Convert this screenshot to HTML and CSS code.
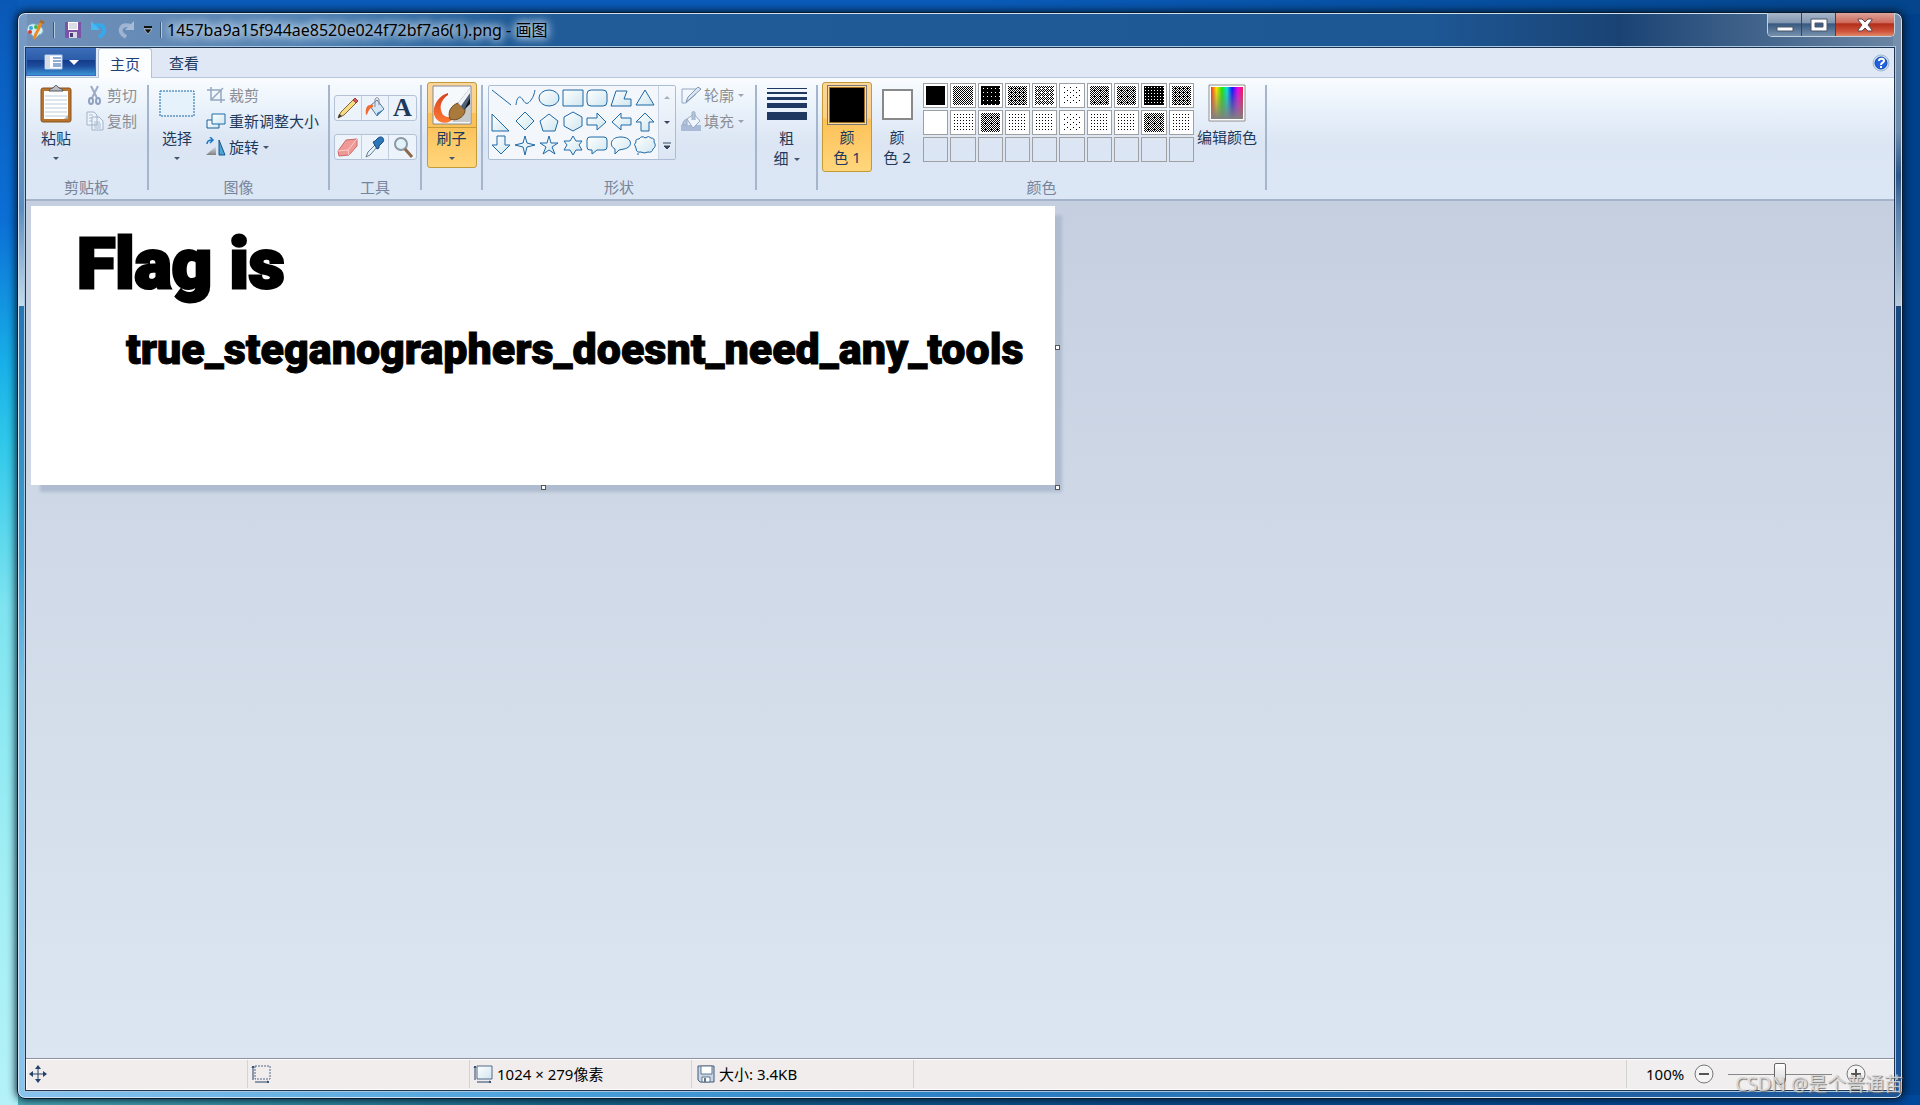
FILE: index.html
```html
<!DOCTYPE html>
<html lang="zh-CN">
<head>
<meta charset="utf-8">
<title>1457ba9a15f944ae8520e024f72bf7a6(1).png - 画图</title>
<link rel="stylesheet" href="styles.css">
</head>
<body>
<svg class="defs" aria-hidden="true">
  <defs>
    <linearGradient id="blueFill" x1="0" y1="0" x2="1" y2="1"><stop offset="0" stop-color="#fff"/><stop offset="1" stop-color="#cfe6ef"/></linearGradient>
    <linearGradient id="rainbow"><stop offset="0" stop-color="#ff2a1a"/><stop offset=".17" stop-color="#ffe600"/><stop offset=".34" stop-color="#20e800"/><stop offset=".5" stop-color="#00e5e5"/><stop offset=".66" stop-color="#1010ff"/><stop offset=".84" stop-color="#f000f0"/><stop offset="1" stop-color="#ff1040"/></linearGradient>
    <linearGradient id="greyFade" x1="0" y1="0" x2="0" y2="1"><stop offset="0" stop-color="#808080" stop-opacity="0"/><stop offset="1" stop-color="#808080"/></linearGradient>
    <linearGradient id="paintRed" x1="0" y1="0" x2="0" y2="1"><stop offset="0" stop-color="#d8401c"/><stop offset="1" stop-color="#ff7a35"/></linearGradient>
  </defs>
</svg>
<div class="window">
  <header class="titlebar">
    <svg class="app-icon" width="20" height="20" viewBox="0 0 20 20"><path d="M1 10C1 5 5 3 9 4c5 1 9 4 8 8-1 3-4 2-5 4-2 3-5 1-6-1-1-1-5-1-5-5z" fill="#d5edf8" stroke="#6da5c5"/><circle cx="5" cy="8" r="2" fill="#37a8d8"/><circle cx="10" cy="7" r="2" fill="#48b848"/><circle cx="4" cy="12" r="2" fill="#d93c2c"/><path d="M16 2c-3 2-2 5-4 8s-3 6-4 9" fill="none" stroke="#ed8a20" stroke-width="3"/><path d="M14 1l4 2" stroke="#a86c30" stroke-width="3"/></svg>
    <span class="bar"></span>
    <div class="quick">
      <button class="plain" aria-label="保存"><svg width="16" height="16" viewBox="0 0 16 16"><path d="M0 0h16v16H1L0 15z" fill="#7b54a8"/><path d="M3 0h10v8H3z" fill="#fff"/><path d="M4 2h8M4 4h8M4 6h8" stroke="#b8b8c8"/><path d="M4 10h8v6H4z" fill="#d8d8e4"/><path d="M5 11h3v4H5z" fill="#4c3c78"/></svg></button>
      <button class="plain" aria-label="撤消"><svg width="18" height="18" viewBox="0 0 18 18"><path d="M4 5c11-3 14 6 5 11" fill="none" stroke="#37a9ea" stroke-width="4"/><path d="M1 0v9h9z" fill="#48b8f4"/></svg></button>
      <button class="plain" aria-label="重做" disabled><svg width="18" height="18" viewBox="0 0 18 18"><path d="M14 5C3 2 0 11 9 16" fill="none" stroke="#9fb3d2" stroke-width="4"/><path d="M17 0v9H8z" fill="#a8bbd6"/></svg></button>
      <button class="plain" aria-label="自定义快速访问工具栏"><svg width="8" height="8" viewBox="0 0 8 8"><path d="M0 1h8" stroke="#111" stroke-width="2"/><path d="M0 3h8L4 8z" fill="#111" stroke="#fff" stroke-width=".5"/></svg></button>
    </div>
    <span class="bar"></span>
    <h1>1457ba9a15f944ae8520e024f72bf7a6(1).png - 画图</h1>
    <div class="caption-buttons">
      <button aria-label="最小化"><svg width="18" height="14" viewBox="0 0 18 14"><path d="M1 9h16v4H1z" fill="#fff" stroke="#4a5568"/></svg></button>
      <button aria-label="最大化"><svg width="18" height="14" viewBox="0 0 18 14"><path d="M1 1h16v12H1zM5 5v4h8V5z" fill="#fff" stroke="#4a5568" fill-rule="evenodd"/></svg></button>
      <button class="close" aria-label="关闭"><svg width="16" height="14" viewBox="0 0 16 14"><path d="M1 1h4l3 3 3-3h4v1l-4 5 4 5v1h-4l-3-3-3 3H1v-1l4-5-4-5z" fill="#fff" stroke="#5a4450"/></svg></button>
    </div>
  </header>

  <div class="client">
    <nav class="tabs">
      <button class="file" aria-label="画图菜单"><svg width="35" height="16" viewBox="0 0 35 16"><path d="M1 1h17v14H1z" fill="#fff" stroke="#a8c4e8"/><path d="M2 2h4v12H2z" fill="#d8dce4"/><path d="M9 4h8M9 7h8M9 10h8M9 12h8" stroke="#235aa8"/><path d="M25 6h10l-5 5z" fill="#fff"/></svg></button>
      <button class="tab active">主页</button>
      <button class="tab">查看</button>
      <button class="plain help" aria-label="帮助"><svg width="18" height="18" viewBox="0 0 18 18"><circle cx="9" cy="9" r="8" fill="#cfe0f4" stroke="#9fb8d4"/><circle cx="9" cy="9" r="6" fill="#1f60dc" stroke="#1848a8"/><path d="M7 7c0-3 5-3 5 0 0 2-3 1-3 4M9 12v2" fill="none" stroke="#fff" stroke-width="2"/></svg></button>
    </nav>

    <div class="ribbon">
      <section class="group clipboard">
        <div class="content">
          <button class="big"><svg width="32" height="38" viewBox="0 0 32 38"><rect x="1" y="3" width="30" height="34" rx="2" fill="#b8742c" stroke="#8a5520"/><path d="M4 6h24v28H4z" fill="#fff"/><path d="M5 11h22M5 15h22M5 19h22M5 23h22M5 27h22M5 31h22" stroke="#b9cdd8"/><path d="M24 34l4-4v4z" fill="#b0b8c0"/><path d="M9 6c0-3 4-2 5-4 1-2 3-2 4 0s5 1 5 4z" fill="#b8bcc4" stroke="#555"/></svg><span>粘贴</span><i class="arrow"></i></button>
          <div class="stack">
            <button class="item" disabled><svg width="18" height="20" viewBox="0 0 18 20"><path d="M5 1l6 12M12 1L6 13" stroke="#9cacc6" stroke-width="2"/><ellipse cx="5" cy="16" rx="2" ry="3" fill="none" stroke="#8ea1c0" stroke-width="2"/><ellipse cx="12" cy="16" rx="2" ry="3" fill="none" stroke="#8ea1c0" stroke-width="2"/></svg>剪切</button>
            <button class="item" disabled><svg width="18" height="20" viewBox="0 0 18 20"><path d="M1 1h7l3 3v10H1zM6 6h7l4 4v9H6z" fill="#eef4fb" stroke="#a0b1c9"/><path d="M3 4h4M3 7h3M3 10h3M8 11h6M8 13h7M8 15h7M8 17h7" stroke="#a9bbd2"/></svg>复制</button>
          </div>
        </div>
        <h2>剪贴板</h2>
      </section>

      <section class="group image">
        <div class="content">
          <button class="big"><svg width="36" height="38" viewBox="0 0 36 38"><rect x="1" y="6" width="34" height="25" fill="#e5f1fb" stroke="#1667a5" stroke-dasharray="2 1"/></svg><span>选择</span><i class="arrow"></i></button>
          <div class="stack">
            <button class="item" disabled><svg width="20" height="20" viewBox="0 0 20 20"><path d="M1 5h14v13M5 2v13h14M6 14L17 3" fill="none" stroke="#94a6c2" stroke-width="1.5"/></svg>裁剪</button>
            <button class="item"><svg width="20" height="20" viewBox="0 0 20 20"><path d="M1 9h12v8H1z" fill="url(#blueFill)" stroke="#1c5c94"/><path d="M6 3h13v10H6z" fill="url(#blueFill)" stroke="#1c6ca8"/></svg>重新调整大小</button>
            <button class="item"><svg width="20" height="20" viewBox="0 0 20 20"><path d="M0 18h10v-9z" fill="url(#greyFade)"/><path d="M13 3l6 15h-6z" fill="#4aa4d4" stroke="#1a5688"/><path d="M1 7c0-3 2-4 5-4M4 0l3 3-3 3" fill="none" stroke="#1c78c4" stroke-width="1.5"/></svg>旋转<i class="arrow"></i></button>
          </div>
        </div>
        <h2>图像</h2>
      </section>

      <section class="group tools">
        <div class="content">
          <div class="toolset">
            <button aria-label="铅笔"><svg width="22" height="22" viewBox="0 0 22 22"><path d="M1 21l3-6L16 3l3 3L7 18z" fill="#f8db82" stroke="#806838"/><path d="M16 3l2-2 3 3-2 2z" fill="#d85858" stroke="#984040"/><path d="M1 21l1-4 3 2z" fill="#333"/></svg></button>
            <button aria-label="用颜色填充"><svg width="22" height="22" viewBox="0 0 22 22"><path d="M6 9l7-6 7 9-7 7z" fill="#d6e8f5" stroke="#587898"/><path d="M11 10V3c0-3 4-3 4 0v5" fill="none" stroke="#889"/><path d="M9 8C3 7 1 11 2 18c3-1 1-6 7-8z" fill="#f06a34"/><path d="M13 16l7-4-7 7z" fill="#4388c4"/></svg></button>
            <button class="letter" aria-label="文本">A</button>
          </div>
          <div class="toolset">
            <button aria-label="橡皮擦"><svg width="22" height="22" viewBox="0 0 22 22"><path d="M9 4l11-1v7l-8 9-10 1-1-5z" fill="#f09a98" stroke="#c86868"/><path d="M1 15l10-1 9-11M11 14l1 5" fill="none" stroke="#fbd0cc"/></svg></button>
            <button aria-label="颜色选取器"><svg width="22" height="22" viewBox="0 0 22 22"><path d="M2 21l2-5 8-8 2 2-8 9z" fill="#e8f4fc" stroke="#667c90"/><path d="M9 6l2-1 3-3c4-3 7 1 5 4l-4 4v2l-2 1z" fill="#2d76b8" stroke="#164c80"/></svg></button>
            <button aria-label="放大镜"><svg width="22" height="22" viewBox="0 0 22 22"><circle cx="9" cy="8" r="6" fill="#e2f2fb" stroke="#8b98a5" stroke-width="2"/><path d="M13 13l7 8" stroke="#8b6848" stroke-width="3"/></svg></button>
          </div>
        </div>
        <h2>工具</h2>
      </section>

      <section class="group brush">
        <button class="big selected split"><svg width="40" height="40" viewBox="0 0 40 40"><path d="M1 1h38v38H1z" fill="#f6f9fb" stroke="#858c94"/><path d="M20 37l18-20v20z" fill="#aaa" opacity=".6"/><path d="M16 8C5 11-1 24 3 32c4 8 16 7 18 1-4-1-10-1-11-5-3-6-1-13 6-18z" fill="url(#paintRed)"/><path d="M18 34c-3-8 2-14 8-16 5 0 9 6 6 11-3 5-9 7-14 5z" fill="#a97a3c" stroke="#704c20"/><path d="M26 18L38 3v14l-6 8z" fill="#4f6078"/><path d="M26 18L38 3v5l-9 13z" fill="#eff2f6"/><path d="M32 25l6-12v6z" fill="#111"/></svg><span>刷子</span><i class="arrow"></i></button>
      </section>

      <section class="group shapes">
        <div class="content">
          <div class="gallery">
            <div class="shape-grid">
              <button aria-label="直线"><svg viewBox="0 0 24 24"><path d="M3 4l19 15"/></svg></button>
              <button aria-label="曲线"><svg viewBox="0 0 24 24"><path d="M3 19c1-9 4-10 7-5s5 4 8 0 3-6 4-10" fill="none"/></svg></button>
              <button aria-label="椭圆形"><svg viewBox="0 0 24 24"><ellipse cx="12" cy="12" rx="10" ry="8"/></svg></button>
              <button aria-label="矩形"><svg viewBox="0 0 24 24"><path d="M2 4h20v16H2z"/></svg></button>
              <button aria-label="圆角矩形"><svg viewBox="0 0 24 24"><rect x="2" y="4" width="20" height="16" rx="4"/></svg></button>
              <button aria-label="多边形"><svg viewBox="0 0 24 24"><path d="M7 5h11l-3 8h7v7H2z"/></svg></button>
              <button aria-label="三角形"><svg viewBox="0 0 24 24"><path d="M12 4l9 15H3z"/></svg></button>
              <button aria-label="直角三角形"><svg viewBox="0 0 24 24"><path d="M3 4l17 17H3z"/></svg></button>
              <button aria-label="菱形"><svg viewBox="0 0 24 24"><path d="M12 2l9 9-9 9-9-9z"/></svg></button>
              <button aria-label="五边形"><svg viewBox="0 0 24 24"><path d="M12 4l9 7-3 10H6L3 11z"/></svg></button>
              <button aria-label="六边形"><svg viewBox="0 0 24 24"><path d="M12 2l9 5v9l-9 5-9-5V7z"/></svg></button>
              <button aria-label="右箭头"><svg viewBox="0 0 24 24"><path d="M2 8h10V3l9 9-9 8v-5H2z"/></svg></button>
              <button aria-label="左箭头"><svg viewBox="0 0 24 24"><path d="M22 8H12V3l-9 9 9 8v-5h10z"/></svg></button>
              <button aria-label="上箭头"><svg viewBox="0 0 24 24"><path d="M8 21v-9H3l9-9 9 9h-5v9z"/></svg></button>
              <button aria-label="下箭头"><svg viewBox="0 0 24 24"><path d="M8 2v9H3l9 9 9-9h-5V2z"/></svg></button>
              <button aria-label="四角星"><svg viewBox="0 0 24 24"><path d="M12 2l2 7 8 2-8 2-2 8-2-8-8-2 8-2z"/></svg></button>
              <button aria-label="五角星"><svg viewBox="0 0 24 24"><path d="M12 2l2 7h7l-6 4 3 7-6-4-6 4 3-7-6-4h7z"/></svg></button>
              <button aria-label="六角星"><svg viewBox="0 0 24 24"><path d="M12 2l3 5h6l-3 4 3 5h-6l-3 5-3-5H3l3-5-3-4h6z"/></svg></button>
              <button aria-label="圆角矩形标注"><svg viewBox="0 0 24 24"><path d="M5 3h14q3 0 3 3v7q0 3-3 3h-7l-5 4v-4H5q-3 0-3-3V6q0-3 3-3z"/></svg></button>
              <button aria-label="椭圆形标注"><svg viewBox="0 0 24 24"><path d="M6 15C0 12 1 3 12 3s13 10 3 12l-5 1-4 4z"/></svg></button>
              <button aria-label="云形标注"><svg viewBox="0 0 24 24"><path d="M6 5q3-4 6-1 4-3 6 0 4 0 3 4 3 4-1 7-1 4-5 3-4 2-7 0-5 1-5-4-3-4 0-6-1-3 3-3zM4 20h2"/></svg></button>
            </div>
            <div class="scroller">
              <button aria-label="向上"><svg width="8" height="8" viewBox="0 0 8 8"><path d="M1 5h6L4 2z" fill="#a5afbf"/></svg></button>
              <button aria-label="向下"><svg width="8" height="8" viewBox="0 0 8 8"><path d="M1 3h6L4 6z" fill="#34465f"/></svg></button>
              <button aria-label="更多"><svg width="8" height="8" viewBox="0 0 8 8"><path d="M0 1h8M1 4h6L4 7z" fill="#34465f" stroke="#34465f"/></svg></button>
            </div>
          </div>
          <div class="stack">
            <button class="item" disabled><svg width="20" height="20" viewBox="0 0 20 20"><path d="M15 4H1v14h4l10-9" fill="none" stroke="#94a6c2"/><path d="M5 17l2-5L17 2l3 2L9 14z" fill="#dce7f5" stroke="#8194b2"/></svg>轮廓<i class="arrow"></i></button>
            <button class="item" disabled><svg width="20" height="20" viewBox="0 0 20 20"><path d="M0 14h20v6H0z" fill="#a9bbd6"/><path d="M6 8l7-5 6 7-7 7z" fill="#eff5fc" stroke="#9aaac5"/><path d="M11 9V2c0-2 3-2 3 0v7M6 8C2 9 2 13 1 14h5z" fill="#b5c4d9" stroke="#9cacc6"/></svg>填充<i class="arrow"></i></button>
          </div>
        </div>
        <h2>形状</h2>
      </section>

      <section class="group size">
        <button class="big"><svg width="40" height="38" viewBox="0 0 40 38"><path d="M0 3h40v1H0zM0 7h40v2H0zM0 12h40v3H0zM0 18h40v5H0zM0 27h40v8H0z" fill="#1f3861"/></svg><span>粗</span><span>细<i class="arrow"></i></span></button>
      </section>

      <section class="group colors">
        <div class="content">
          <button class="big selected"><span class="swatch first"></span><span>颜</span><span>色 1</span></button>
          <button class="big"><span class="swatch second"></span><span>颜</span><span>色 2</span></button>
          <div class="palette">
            <button class="p solid" aria-label="黑色"></button><button class="p check" aria-label="灰色 50%"></button><button class="p sparse-white" aria-label="深红色"></button><button class="p dense" aria-label="红色"></button><button class="p cross" aria-label="橙色"></button><button class="p light" aria-label="黄色"></button><button class="p mesh" aria-label="绿色"></button><button class="p mesh" aria-label="青绿"></button><button class="p grid-white" aria-label="靛青"></button><button class="p dense" aria-label="紫色"></button>
            <button class="p blank" aria-label="白色"></button><button class="p dots" aria-label="灰色 25%"></button><button class="p mesh" aria-label="褐色"></button><button class="p dots" aria-label="玫瑰色"></button><button class="p dots" aria-label="金色"></button><button class="p light" aria-label="浅黄色"></button><button class="p dots" aria-label="酸橙色"></button><button class="p dots" aria-label="淡青绿色"></button><button class="p mesh" aria-label="蓝灰色"></button><button class="p dots" aria-label="淡紫色"></button>
            <button class="p" aria-label="空 1"></button><button class="p" aria-label="空 2"></button><button class="p" aria-label="空 3"></button><button class="p" aria-label="空 4"></button><button class="p" aria-label="空 5"></button><button class="p" aria-label="空 6"></button><button class="p" aria-label="空 7"></button><button class="p" aria-label="空 8"></button><button class="p" aria-label="空 9"></button><button class="p" aria-label="空 10"></button>
          </div>
          <button class="big edit"><svg width="38" height="38" viewBox="0 0 38 38"><path d="M1 1h36v36H1z" fill="#fff" stroke="#8e8e8e"/><path d="M3 3h32v32H3z" fill="url(#rainbow)"/><path d="M3 3h32v32H3z" fill="url(#greyFade)"/></svg><span>编辑颜色</span></button>
        </div>
        <h2>颜色</h2>
      </section>
    </div>

    <main class="workspace">
      <div class="canvas">
        <p class="headline">Flag is</p>
        <p class="flag">true_steganographers_doesnt_need_any_tools</p>
        <i class="handle east"></i><i class="handle south"></i><i class="handle corner"></i>
      </div>
    </main>

    <footer class="status">
      <div class="cell"><svg width="18" height="18" viewBox="0 0 18 18"><path d="M9 1v16M1 9h16" fill="none" stroke="#24436b"/><path d="M9 0l3 4H6zM9 18l3-4H6zM0 9l4-3v6zM18 9l-4-3v6z" fill="#24436b"/></svg></div>
      <div class="cell"><svg width="20" height="18" viewBox="0 0 20 18"><path d="M4 1h15v13H4z" fill="none" stroke="#52698a" stroke-dasharray="2 1"/><path d="M2 1v14M1 3l1-2 1 2M4 17h14M16 16l2 1-2 1" fill="none" stroke="#24436b"/></svg></div>
      <div class="cell"><svg width="20" height="18" viewBox="0 0 20 18"><path d="M4 1h15v13H4z" fill="url(#blueFill)" stroke="#52698a"/><path d="M2 1v14M1 3l1-2 1 2M4 17h14M16 16l2 1-2 1" fill="none" stroke="#24436b"/></svg>1024 × 279像素</div>
      <div class="cell disk"><svg width="18" height="18" viewBox="0 0 18 18"><path d="M1 1h16v16H3l-2-2z" fill="#c6d6e4" stroke="#40587a"/><path d="M4 1h11v8H4zM5 12h8v5H5z" fill="#fff" stroke="#60748e"/><path d="M7 13h2v4H7z" fill="#60748e"/></svg>大小: 3.4KB</div>
      <div class="zoom">
        <label for="zoom">100%</label>
        <button class="plain" aria-label="缩小"><svg width="20" height="20" viewBox="0 0 20 20"><circle cx="10" cy="10" r="9" fill="#f4f4f4" stroke="#777"/><path d="M5 10h10" stroke="#555" stroke-width="2"/></svg></button>
        <input id="zoom" type="range" min="0" max="100" value="50">
        <button class="plain" aria-label="放大"><svg width="20" height="20" viewBox="0 0 20 20"><circle cx="10" cy="10" r="9" fill="#f4f4f4" stroke="#777"/><path d="M5 10h10M10 5v10" stroke="#555" stroke-width="2"/></svg></button>
      </div>
    </footer>
  </div>
</div>
<div class="watermark">CSDN @是个普通苗</div>
</body>
</html>
```
FILE: styles.css
```css
* { box-sizing: border-box; }
body {
  margin: 0;
  min-height: 100vh;
  padding: 12px 17px 6px 17px;
  display: flex;
  position: relative;
  overflow: hidden;
  font: 15px/20px "Noto Sans", "Noto Sans CJK SC", sans-serif;
  color: #1e395b;
  background:
    linear-gradient(#0a58b6, #0b6fd6 20%, #18b0e8 33%, #2fc8ea 40%, #7ee4f0 55%, #a0eef4 78%, #b4f2f8) left / 18px 100% no-repeat,
    linear-gradient(90deg, #0a5cba, #0a5cba 50%, #04458c) top / 100% 14px no-repeat,
    linear-gradient(90deg, #4fb0b8, #17688a 30%, #0a4c8c 60%, #00489c) bottom / 100% 10px no-repeat,
    #00418c;
}
button { font: inherit; color: inherit; margin: 0; padding: 0; border: 0; background: none; }
svg { display: block; flex: none; }
h1, h2, p { margin: 0; font-weight: normal; }
.defs { position: absolute; width: 0; height: 0; }
.plain { display: flex; align-items: center; }

.window {
  flex: 1;
  display: flex;
  flex-direction: column;
  border: 1px solid #0a1a2c;
  border-radius: 8px;
  padding: 0 7px 7px;
  box-shadow: inset 0 0 0 1px #cfe2f2, 0 0 8px 1px #00182c;
  background:
    linear-gradient(#7b9cc4, #5d8dc0 18%, #c5dcea 27%, #2676b4 27%, #3ca0d0 50%, #78c0e8 62%, #88c4ee) left / 9px 100% no-repeat,
    linear-gradient(#7890ac, #6f8cac 11%, #2b5688 15%, #5c80a8 18%, #b8cbdc 27%, #1c4a80 27%, #1c5496) right / 9px 100% no-repeat,
    linear-gradient(90deg, #88c4ee, #4aa0da 28%, #2c80c4 50%, #1c5496) bottom / 100% 9px no-repeat,
    linear-gradient(90deg, #7391b8, #5484b4 15%, #215c98 26%, #1d5794 75%, #1a4374 85%, #6c86a4);
}
.titlebar { display: flex; align-items: center; height: 34px; padding-left: 1px; }
.app-icon { margin-right: 7px; }
.bar { width: 2px; height: 16px; background: #3c5878; border-right: 1px solid #b5c8dc; }
.quick { display: flex; align-items: center; gap: 9px; padding: 0 8px 0 10px; }
h1 {
  flex: 1;
  padding-left: 5px;
  font-size: 16px;
  color: #000;
  text-shadow: 0 0 8px #d5e4f2, 0 0 8px #c5d8ea, 0 0 12px #c5d8ea;
}
.caption-buttons {
  align-self: flex-start;
  display: flex;
  height: 24px;
  border: 1px solid #c5d2de;
  border-top: 0;
  border-radius: 0 0 5px 5px;
  overflow: hidden;
}
.caption-buttons button {
  display: grid;
  place-items: center;
  width: 34px;
  border-right: 1px solid #2b4668;
  background: linear-gradient(#a9b8ca, #7e94ad 45%, #37577e 46%, #7691ae);
}
.caption-buttons .close { width: 58px; border: 0; background: linear-gradient(#dfa299, #cc6657 45%, #b02c18 46%, #d0543c 80%, #e08868); }

.client { flex: 1; display: flex; flex-direction: column; border: 1px solid #1e3450; box-shadow: 0 0 0 1px #aac8e0; background: #dfe8f4; }
.tabs { display: flex; height: 30px; background: #dfe8f4; border-bottom: 1px solid #b9c8da; }
.file {
  display: grid;
  place-items: center;
  width: 70px;
  height: 28px;
  margin-right: 2px;
  border: 1px solid #3a6cc0;
  background: linear-gradient(#3b6cb8, #2c5ca8 42%, #143c88 43%, #1c4c9c 65%, #3a94d4);
}
.tab { width: 54px; height: 30px; margin-right: 5px; }
.active { border: 1px solid #b3c4da; border-bottom: 0; border-radius: 3px 3px 0 0; background: #fbfdff; color: #1e3f78; }
.help { margin-left: auto; margin-right: 4px; }

.ribbon {
  display: flex;
  height: 123px;
  padding-top: 4px;
  border-bottom: 2px solid #a5b4ca;
  background: linear-gradient(#f9fcff, #e8f1fa 27%, #dbe5f3 55%, #dce7f5);
}
.group { display: flex; flex-direction: column; align-items: center; border-right: 2px solid transparent; border-image: linear-gradient(transparent 3%, #a5b6cc 3%, #a5b6cc 92%, transparent 92%) 1; }
.content { flex: 1; display: flex; align-items: flex-start; width: 100%; }
h2 { font-size: 15px; line-height: 20px; height: 22px; color: #76849c; }
.clipboard { width: 123px; }
.image { width: 181px; }
.tools { width: 92px; }
.brush { width: 61px; }
.shapes { width: 274px; }
.size { width: 61px; }
.colors { width: 449px; }

.big { display: flex; flex-direction: column; align-items: center; width: 50px; min-height: 84px; padding-top: 3px; }
.big > span { white-space: nowrap; line-height: 20px; }
.big > svg { margin-bottom: 5px; }
.arrow { display: inline-block; border: 3px solid transparent; border-top: 3px solid #45556c; border-bottom: 0; vertical-align: middle; }
.big > .arrow { margin-top: 9px; }
.big span .arrow { margin-left: 5px; }
.item .arrow { margin-left: 1px; }
.clipboard .big { margin-left: 5px; }
.clipboard .stack { margin-left: 5px; }
.image .big { margin-left: 3px; }
.image .stack { margin-left: 4px; }
.stack { display: flex; flex-direction: column; gap: 6px; padding-top: 3px; }
.item { display: flex; align-items: center; gap: 3px; height: 20px; white-space: nowrap; }
.item:disabled { color: #8b8f96; }
.item:disabled .arrow { opacity: .5; }

.tools .content { flex-direction: column; gap: 13px; padding: 13px 4px 0; }
.toolset { display: flex; height: 26px; border: 1px solid #b3c2d6; border-radius: 3px; background: #edf3fb; }
.toolset button { display: grid; place-items: center; width: 27px; border-right: 1px solid #c0cddd; }
.toolset button:last-child { border: 0; }
.toolset .letter { font: bold 26px/24px "Liberation Serif", serif; }

.selected { border: 1px solid #c29a36; border-radius: 3px; background: linear-gradient(#fbd69a, #fdcf86 40%, #fdc157 41%, #ffd67c); }
.brush .big { height: 86px; }
.split { padding-top: 2px; background: linear-gradient(#fbd69a, #fdcf86 35%, #fdc157 36%, #fdc157 52%, #c29a36 52%, #c29a36 53%, #fdc35c 53%, #ffd67c); }
.split > svg { margin-bottom: 3px; }

.shapes .content { gap: 5px; padding-left: 5px; }
.gallery { display: flex; margin-top: 3px; height: 75px; border: 1px solid #abbdd4; border-radius: 2px; background: #f3f7fc; }
.shape-grid { display: grid; grid-template: repeat(3, 24px) / repeat(7, 24px); width: 169px; }
.shape-grid svg { width: 24px; height: 24px; fill: url(#blueFill); stroke: #1e68a5; }
.scroller { display: grid; grid-template-rows: repeat(3, 24px); width: 17px; border-left: 1px solid #c5d3e4; background: linear-gradient(#f4f8fd, #dce6f3); }
.scroller button { display: grid; place-items: center; }

.swatch { border: 1px solid #808080; }
.first { width: 40px; height: 40px; margin-bottom: 2px; border: 1px solid #777; background: #000; box-shadow: inset 0 0 0 1px #ffdc9c, inset 0 0 0 2px #a06c1c; }
.second { width: 31px; height: 31px; margin: 4px 0 7px; border: 2px solid #898989; background: #fff; }
.colors .content { padding-left: 4px; }
.colors .big { height: 90px; padding-top: 2px; }
.colors .big:nth-child(2) { padding-top: 3px; }
.palette { display: grid; grid-template: repeat(3, 25px) / repeat(10, 1fr); gap: 2px; width: 271px; margin: 1px 0 0 1px; }
.p { border: 1px solid #a0a0a0; padding: 2px; background-clip: content-box; background-color: transparent; }
.solid, .sparse-white, .dense, .cross, .mesh, .grid-white, .dots, .light, .check, .blank { box-shadow: inset 0 0 0 2px #fff; }
.solid { background-color: #000; }
.blank { background-color: #fff; }
.check { background-image: repeating-conic-gradient(#000 0 25%, #fff 0 50%); background-size: 2px 2px; }
.sparse-white { background-image: conic-gradient(at 1px 1px, #000 75%, #fff 0); background-size: 4px 4px; }
.dense { background-image: conic-gradient(at 1px 1px, transparent 75%, #000 0), repeating-conic-gradient(#fff 0 25%, #000 0 50%); background-position: 1px 0, 0 0; background-size: 4px 4px, 2px 2px; }
.cross { background-image: conic-gradient(at 1px 1px, transparent 75%, #fff 0), repeating-conic-gradient(#fff 0 25%, #000 0 50%); background-size: 4px 4px, 2px 2px; }
.light { background-color: #fff; background-image: conic-gradient(at 1px 1px, transparent 75%, #000 0), conic-gradient(at 1px 1px, transparent 75%, #000 0); background-position: 1px 1px, 4px 3px; background-size: 6px 5px; }
.mesh { background-image: conic-gradient(at 1px 1px, transparent 75%, #000 0), repeating-conic-gradient(#000 0 25%, #fff 0 50%); background-size: 6px 6px, 2px 2px; }
.grid-white { background-image: conic-gradient(at 1px 1px, #000 75%, #fff 0); background-size: 3px 3px; }
.dots { background-color: #fff; background-image: conic-gradient(at 1px 1px, transparent 75%, #000 0); background-size: 3px 3px; }
.colors .edit { width: 62px; margin-left: 2px; }

.workspace { flex: 1; padding: 5px 5px 4px; background: linear-gradient(#c6cfe0, #d0dae8 45%, #dce6f2); }
.canvas { position: relative; width: 1024px; min-height: 279px; padding: 14px 46px 0; background: #fff; color: #000; box-shadow: 8px 8px 3px -1px #afbcd0; }
.headline, .flag { font-family: Roboto, sans-serif; font-weight: 900; white-space: nowrap; -webkit-text-stroke: 3px #000; }
.headline { font-size: 70px; line-height: 88px; }
.flag { padding-left: 49px; margin-top: 15px; font-size: 43px; line-height: 52px; -webkit-text-stroke-width: 1px; }
.handle { position: absolute; width: 5px; height: 5px; border: 1px solid #555; background: #fff; }
.east { right: -5px; top: calc(50% - 1px); }
.south { left: calc(50% - 2px); bottom: -5px; }
.corner { right: -5px; bottom: -5px; }

.status { display: flex; height: 32px; padding: 1px 0; border-top: 1px solid #8d919c; border-bottom: 1px solid #fff; background: #f1edec; color: #000; box-shadow: inset 1px 1px #fff; }
.cell { display: flex; align-items: center; gap: 4px; width: 222px; padding-left: 3px; border-right: 1px solid #d5d2d2; }
.disk { padding-left: 5px; }
.zoom { display: flex; align-items: center; width: 268px; margin-left: auto; border-left: 1px solid #d5d2d2; padding-left: 19px; background: #f0eeee; }
.zoom label { width: 48px; }
.zoom input { width: 104px; height: 22px; margin: 0 14px; appearance: none; background: linear-gradient(#888, #888) center / 100% 1px no-repeat; }
.zoom input::-webkit-slider-thumb { appearance: none; width: 12px; height: 22px; border: 1px solid #666; border-radius: 2px 2px 6px 6px; background: linear-gradient(#fff, #d4d4d4); }
.watermark { position: absolute; right: 17px; bottom: 8px; font-size: 19px; line-height: 26px; color: #d5d5d5; text-shadow: 1px 1px 1px #666; opacity: .85; }
```
